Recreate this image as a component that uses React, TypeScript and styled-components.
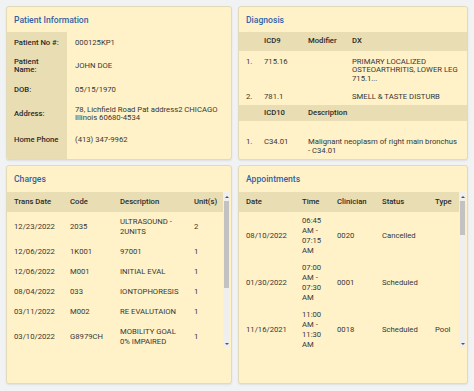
import React from "react";
import styled, { createGlobalStyle } from "styled-components";

const GlobalStyle = createGlobalStyle`
  html, body {
    margin: 0;
    padding: 0;
    background: #f1f2f3;
    font-family: Roboto, "Liberation Sans", Arial, sans-serif;
    color: #363636;
  }
  * { box-sizing: border-box; }
`;

const TAN = "#e9ddb3";

const Page = styled.div`
  display: grid;
  grid-template-columns: 226px 1fr;
  grid-template-rows: 154px 219px;
  gap: 5px 6px;
  padding: 6px;
  width: 474px;
  height: 391px;
`;

const Card = styled.section`
  display: flex;
  flex-direction: column;
  background: #fff2c8;
  border: 1px solid #e3dab9;
  border-radius: 3px;
  box-shadow: 0 1px 2px rgba(0, 0, 0, 0.08);
  overflow: hidden;
  min-height: 0;
`;

const Title = styled.h2<{ $tall?: boolean }>`
  margin: 0;
  flex: none;
  height: ${(p) => (p.$tall ? "26px" : "25px")};
  padding: 0 7px;
  display: flex;
  align-items: center;
  font-size: 8.6px;
  font-weight: 500;
  color: #3063a9;
`;

const Body = styled.div<{ $labelCol?: number }>`
  flex: 1;
  min-height: 0;
  display: flex;
  flex-direction: column;
  background: ${(p) =>
    p.$labelCol
      ? `linear-gradient(to right, ${TAN} ${p.$labelCol}px, transparent ${p.$labelCol}px)`
      : "transparent"};
`;

const Table = styled.table<{ $lh?: number }>`
  width: 100%;
  border-collapse: collapse;
  table-layout: fixed;
  font-size: 7.7px;
  line-height: ${(p) => p.$lh ?? 10}px;
`;

const Row = styled.tr<{ $h?: number }>`
  height: ${(p) => (p.$h ? `${p.$h}px` : "auto")};
`;

const Cell = styled.td<{ $pad?: string; $top?: boolean }>`
  padding: ${(p) => p.$pad ?? "5px 3px 5px 7px"};
  vertical-align: ${(p) => (p.$top ? "top" : "middle")};
  text-align: left;
  font-weight: 400;
  color: #363636;
`;

const NoWrap = styled.span`
  white-space: nowrap;
`;

const LabelCell = styled.th`
  width: 60px;
  padding: 0 8px 0 7px;
  text-align: left;
  vertical-align: middle;
  font-weight: 500;
  color: #2b2b2b;
`;

const HeadRow = styled.tr`
  background: ${TAN};
`;

const HeadCell = styled.th<{ $w?: number; $pad?: string }>`
  padding: ${(p) => p.$pad ?? "5px 3px 5px 7px"};
  text-align: left;
  vertical-align: middle;
  font-weight: 500;
  color: #2b2b2b;
  width: ${(p) => (p.$w ? `${p.$w}px` : "auto")};
`;

const ScrollArea = styled.div`
  height: 156px;
  flex: none;
  display: flex;
  overflow: hidden;
`;

const ScrollContent = styled.div`
  flex: 1;
  min-width: 0;
  overflow: hidden;
`;

const ScrollBar = styled.div`
  flex: none;
  width: 7px;
  margin-right: 1px;
  background: #efefef;
  display: flex;
  flex-direction: column;
`;

const Arrow = styled.div<{ $down?: boolean }>`
  flex: none;
  height: 9px;
  display: flex;
  align-items: center;
  justify-content: center;

  &::after {
    content: "";
    width: 0;
    height: 0;
    border-left: 2px solid transparent;
    border-right: 2px solid transparent;
    ${(p) =>
      p.$down ? "border-top: 2.5px solid #555;" : "border-bottom: 2.5px solid #555;"}
  }
`;

const Track = styled.div`
  flex: 1;
  padding: 0 1px;
`;

const Thumb = styled.div<{ $size: number }>`
  height: ${(p) => p.$size}px;
  background: #c2c2c2;
`;

const Scroller = ({ thumb, children }: { thumb: number; children: React.ReactNode }) => (
  <ScrollArea>
    <ScrollContent>{children}</ScrollContent>
    <ScrollBar>
      <Arrow />
      <Track>
        <Thumb $size={thumb} />
      </Track>
      <Arrow $down />
    </ScrollBar>
  </ScrollArea>
);

const patient: [string, string, number][] = [
  ["Patient No #:", "000125KP1", 22],
  ["Patient Name:", "JOHN DOE", 24],
  ["DOB:", "05/15/1970", 24],
  ["Address:", "78, Lichfield Road Pat address2 CHICAGO Illinois 60680-4534", 24],
  ["Home Phone", "(413) 347-9962", 29],
];

const charges = [
  ["12/23/2022", "2035", "ULTRASOUND - 2UNITS", "2"],
  ["12/06/2022", "1K001", "97001", "1"],
  ["12/06/2022", "M001", "INITIAL EVAL", "1"],
  ["08/04/2022", "033", "IONTOPHORESIS", "1"],
  ["03/11/2022", "M002", "RE EVALUTAION", "1"],
  ["03/10/2022", "G8979CH", "MOBILITY GOAL 0% IMPAIRED", "1"],
];

const appts = [
  ["08/10/2022", "06:45 AM - 07:15 AM", "0020", "Cancelled", ""],
  ["01/30/2022", "07:00 AM - 07:30 AM", "0001", "Scheduled", ""],
  ["11/16/2021", "11:00 AM - 11:30 AM", "0018", "Scheduled", "Pool"],
];

const PatientInfo = () => (
  <Card>
    <Title>Patient Information</Title>
    <Body $labelCol={60}>
      <Table $lh={8.5}>
        <tbody>
          {patient.map(([k, v, h]) => (
            <Row key={k} $h={h}>
              <LabelCell>{k}</LabelCell>
              <Cell $pad="0 3px 0 8px">{v}</Cell>
            </Row>
          ))}
        </tbody>
      </Table>
    </Body>
  </Card>
);

const dxPad = "7px 3px 3px 7px";
const dxLastPad = "17px 3px 3px 7px";

const Diagnosis = () => (
  <Card>
    <Title>Diagnosis</Title>
    <Body>
      <Table $lh={8.5}>
        <colgroup>
          <col style={{ width: 18 }} />
          <col style={{ width: 44 }} />
          <col style={{ width: 44 }} />
          <col />
        </colgroup>
        <tbody>
          <HeadRow>
            <HeadCell />
            <HeadCell>ICD9</HeadCell>
            <HeadCell>Modifier</HeadCell>
            <HeadCell>DX</HeadCell>
          </HeadRow>
          <tr>
            <Cell $top $pad={dxPad}>1.</Cell>
            <Cell $top $pad={dxPad}>715.16</Cell>
            <Cell $top $pad={dxPad} />
            <Cell $top $pad={dxPad}>
              PRIMARY LOCALIZED OSTEOARTHRITIS, LOWER LEG 715.1...
            </Cell>
          </tr>
          <tr>
            <Cell $top $pad={dxPad}>2.</Cell>
            <Cell $top $pad={dxPad}>781.1</Cell>
            <Cell $top $pad={dxPad} />
            <Cell $top $pad={dxPad}>SMELL &amp; TASTE DISTURB</Cell>
          </tr>
          <HeadRow>
            <HeadCell $pad="4px 3px 4px 7px" />
            <HeadCell $pad="4px 3px 4px 7px">ICD10</HeadCell>
            <HeadCell $pad="4px 3px 4px 7px" colSpan={2}>
              Description
            </HeadCell>
          </HeadRow>
          <tr>
            <Cell $top $pad={dxLastPad}>1.</Cell>
            <Cell $top $pad={dxLastPad}>C34.01</Cell>
            <Cell $top $pad={dxLastPad} colSpan={2}>
              Malignant neoplasm of right main bronchus <NoWrap>- C34.01</NoWrap>
            </Cell>
          </tr>
        </tbody>
      </Table>
    </Body>
  </Card>
);

const Charges = () => (
  <Card>
    <Title $tall>Charges</Title>
    <Body>
      <Scroller thumb={87}>
        <Table>
          <thead>
            <HeadRow>
              <HeadCell $w={56}>Trans Date</HeadCell>
              <HeadCell $w={50}>Code</HeadCell>
              <HeadCell $w={74}>Description</HeadCell>
              <HeadCell>Unit(s)</HeadCell>
            </HeadRow>
          </thead>
          <tbody>
            {charges.map((r, i) => (
              <tr key={i}>
                {r.map((c, j) => (
                  <Cell key={j}>{c}</Cell>
                ))}
              </tr>
            ))}
          </tbody>
        </Table>
      </Scroller>
    </Body>
  </Card>
);

const Appointments = () => (
  <Card>
    <Title $tall>Appointments</Title>
    <Body>
      <Scroller thumb={34}>
        <Table>
          <thead>
            <HeadRow>
              <HeadCell $w={56}>Date</HeadCell>
              <HeadCell $w={35}>Time</HeadCell>
              <HeadCell $w={45}>Clinician</HeadCell>
              <HeadCell $w={53}>Status</HeadCell>
              <HeadCell>Type</HeadCell>
            </HeadRow>
          </thead>
          <tbody>
            {appts.map((r, i) => (
              <tr key={i}>
                {r.map((c, j) => (
                  <Cell key={j} $pad="4px 3px 3px 7px">
                    {c}
                  </Cell>
                ))}
              </tr>
            ))}
          </tbody>
        </Table>
      </Scroller>
    </Body>
  </Card>
);

export default function App() {
  return (
    <>
      <GlobalStyle />
      <Page>
        <PatientInfo />
        <Diagnosis />
        <Charges />
        <Appointments />
      </Page>
    </>
  );
}
